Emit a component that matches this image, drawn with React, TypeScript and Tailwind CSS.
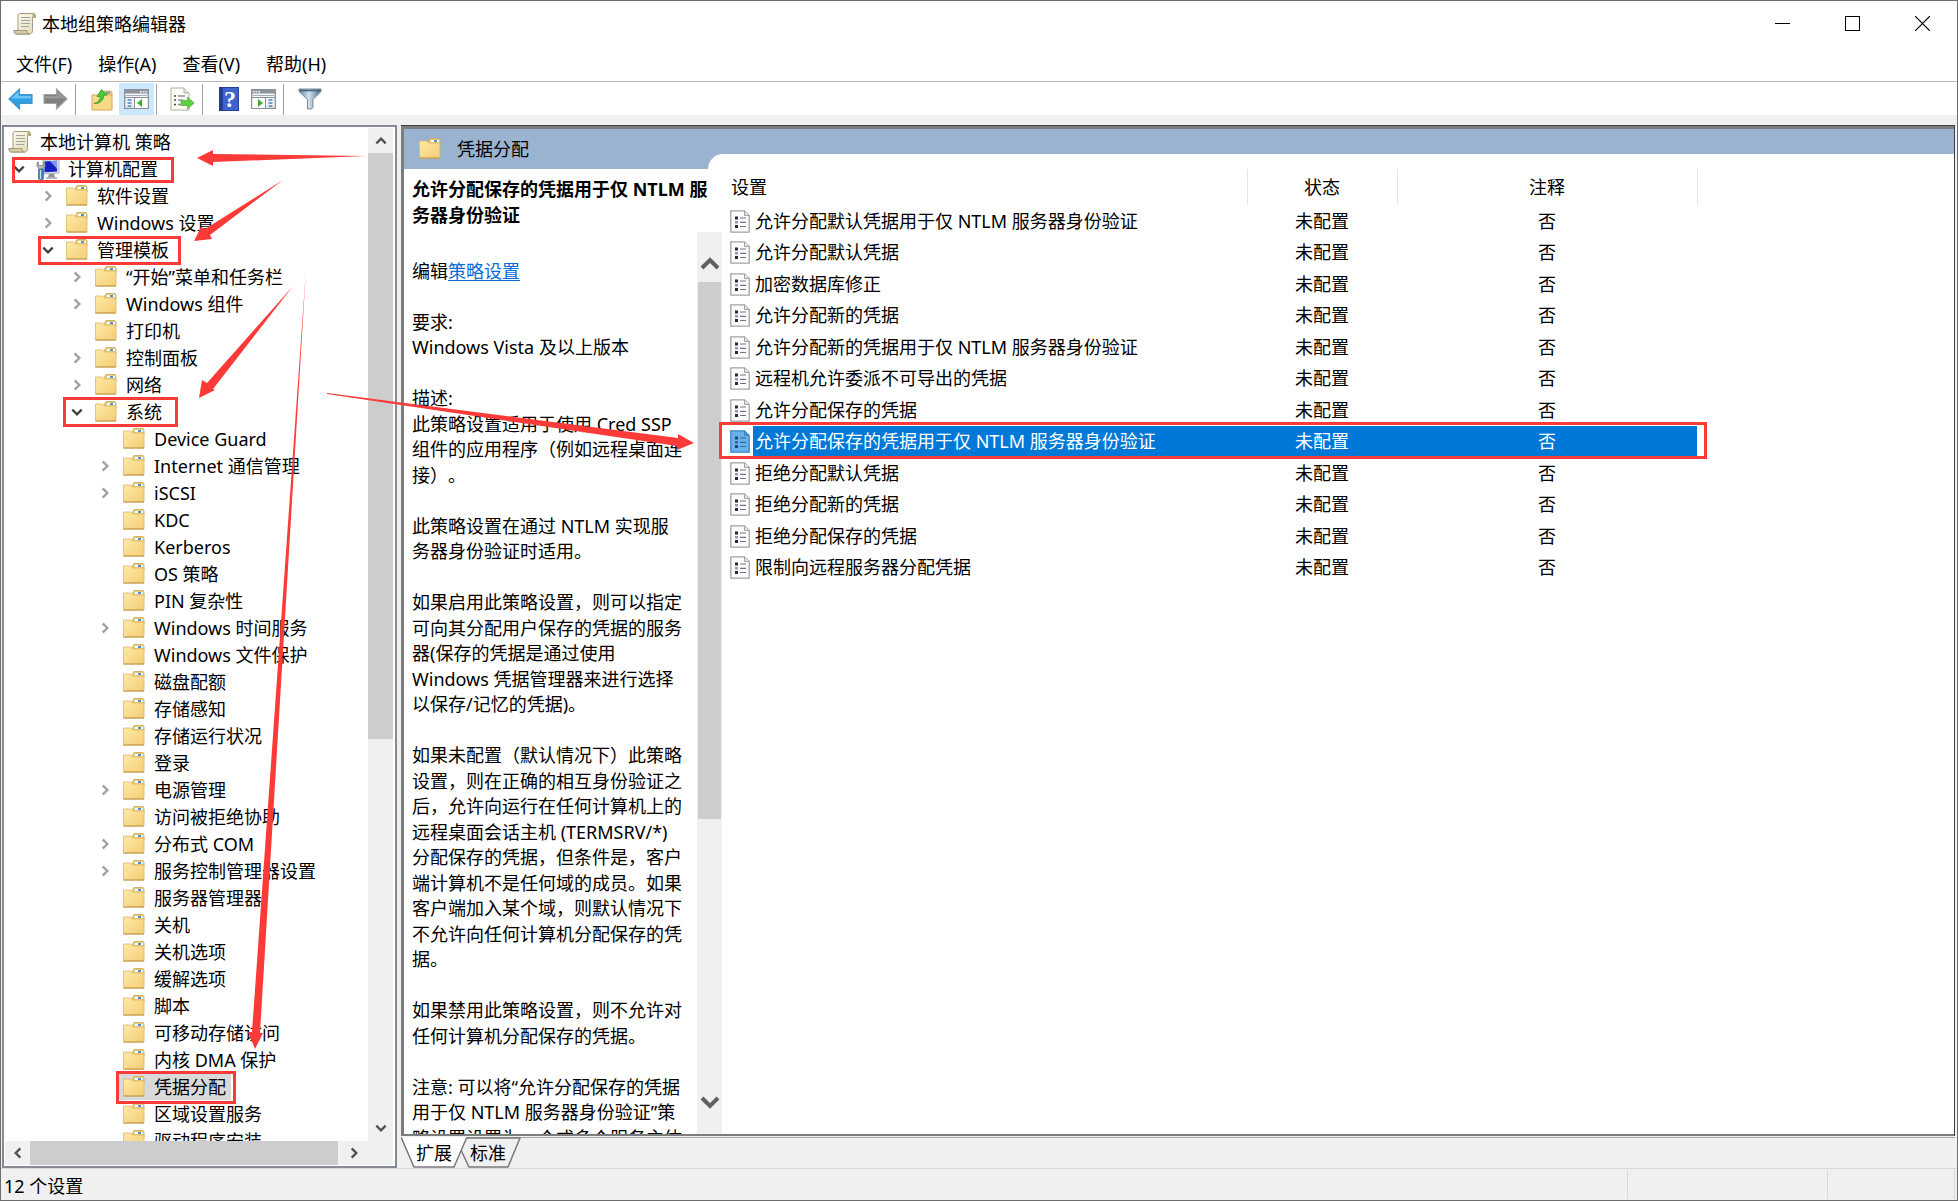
import { ReactNode } from 'react';
import clsx from 'clsx';

type TreeItem = {
  label: string;
  level: number;
  icon?: 'scroll' | 'computer';
  state?: 'open' | 'closed';
  selected?: boolean;
};

const tree: TreeItem[] = [
  { label: '本地计算机 策略', level: 0, icon: 'scroll' },
  { label: '计算机配置', level: 1, icon: 'computer', state: 'open' },
  { label: '软件设置', level: 2, state: 'closed' },
  { label: 'Windows 设置', level: 2, state: 'closed' },
  { label: '管理模板', level: 2, state: 'open' },
  { label: '“开始”菜单和任务栏', level: 3, state: 'closed' },
  { label: 'Windows 组件', level: 3, state: 'closed' },
  { label: '打印机', level: 3 },
  { label: '控制面板', level: 3, state: 'closed' },
  { label: '网络', level: 3, state: 'closed' },
  { label: '系统', level: 3, state: 'open' },
  { label: 'Device Guard', level: 4 },
  { label: 'Internet 通信管理', level: 4, state: 'closed' },
  { label: 'iSCSI', level: 4, state: 'closed' },
  { label: 'KDC', level: 4 },
  { label: 'Kerberos', level: 4 },
  { label: 'OS 策略', level: 4 },
  { label: 'PIN 复杂性', level: 4 },
  { label: 'Windows 时间服务', level: 4, state: 'closed' },
  { label: 'Windows 文件保护', level: 4 },
  { label: '磁盘配额', level: 4 },
  { label: '存储感知', level: 4 },
  { label: '存储运行状况', level: 4 },
  { label: '登录', level: 4 },
  { label: '电源管理', level: 4, state: 'closed' },
  { label: '访问被拒绝协助', level: 4 },
  { label: '分布式 COM', level: 4, state: 'closed' },
  { label: '服务控制管理器设置', level: 4, state: 'closed' },
  { label: '服务器管理器', level: 4 },
  { label: '关机', level: 4 },
  { label: '关机选项', level: 4 },
  { label: '缓解选项', level: 4 },
  { label: '脚本', level: 4 },
  { label: '可移动存储访问', level: 4 },
  { label: '内核 DMA 保护', level: 4 },
  { label: '凭据分配', level: 4, selected: true },
  { label: '区域设置服务', level: 4 },
  { label: '驱动程序安装', level: 4 },
];

const indent = ['pl-0', 'pl-1', 'pl-[33px]', 'pl-[62px]', 'pl-[90px]'];

const description = [
  '要求:',
  'Windows Vista 及以上版本',
  '',
  '描述:',
  '此策略设置适用于使用 Cred SSP',
  '组件的应用程序（例如远程桌面连',
  '接）。',
  '',
  '此策略设置在通过 NTLM 实现服',
  '务器身份验证时适用。',
  '',
  '如果启用此策略设置，则可以指定',
  '可向其分配用户保存的凭据的服务',
  '器(保存的凭据是通过使用',
  'Windows 凭据管理器来进行选择',
  '以保存/记忆的凭据)。',
  '',
  '如果未配置（默认情况下）此策略',
  '设置，则在正确的相互身份验证之',
  '后，允许向运行在任何计算机上的',
  '远程桌面会话主机 (TERMSRV/*)',
  '分配保存的凭据，但条件是，客户',
  '端计算机不是任何域的成员。如果',
  '客户端加入某个域，则默认情况下',
  '不允许向任何计算机分配保存的凭',
  '据。',
  '',
  '如果禁用此策略设置，则不允许对',
  '任何计算机分配保存的凭据。',
  '',
  '注意: 可以将“允许分配保存的凭据',
  '用于仅 NTLM 服务器身份验证”策',
  '略设置设置为一个或多个服务主体',
];

const settings = [
  '允许分配默认凭据用于仅 NTLM 服务器身份验证',
  '允许分配默认凭据',
  '加密数据库修正',
  '允许分配新的凭据',
  '允许分配新的凭据用于仅 NTLM 服务器身份验证',
  '远程机允许委派不可导出的凭据',
  '允许分配保存的凭据',
  '允许分配保存的凭据用于仅 NTLM 服务器身份验证',
  '拒绝分配默认凭据',
  '拒绝分配新的凭据',
  '拒绝分配保存的凭据',
  '限制向远程服务器分配凭据',
];
const selectedSetting = 7;

function ScrollIcon() {
  return (
    <svg className="w-6 h-6 shrink-0" viewBox="0 0 24 24">
      <defs>
        <linearGradient id="paper" x1="0" y1="0" x2="1" y2="1">
          <stop offset="0" stopColor="#fffdf0" />
          <stop offset="1" stopColor="#e2d9b4" />
        </linearGradient>
      </defs>
      <path d="M7 1.500h13c2 0 3 1.500 2.500 4h-3v13c0 2-1 3.500-3 3.500H4c-2 0-3-1-3-3.500h4V4c0-1.500.8-2.500 2-2.500z" fill="url(#paper)" stroke="#a39c80" strokeWidth="1" />
      <path d="M1 18.500h13c0 2 .8 3.500 2.500 3.500H4c-2 0-3-1-3-3.500z" fill="#d8cea6" stroke="#948c6c" strokeWidth=".8" />
      <path d="M20 1.500c2 0 3 1.500 2.500 4h-3c0-2 0-4 .5-4z" fill="#b8ac7c" />
      <path d="M8 5.500h9M8 8.500h9M8 11.500h9M8 14.500h8" stroke="#a3a3a8" strokeWidth="1.200" />
    </svg>
  );
}

function ComputerIcon() {
  return (
    <svg className="w-6 h-6 shrink-0" viewBox="0 0 24 24">
      <path d="M13 17h5l1 3h-7z" fill="#8c949a" />
      <path d="M10 20h11v2H10z" fill="#b3b8bc" />
      <path d="M7 3l16-1v14l-16 1z" fill="#d9dde2" stroke="#9aa1a8" strokeWidth=".8" />
      <path d="M8.500 4.500l12.500-.8v10.800l-12.500.8z" fill="#1420c4" />
      <path d="M14 4.200l7-.5v8z" fill="#7d95ee" />
      <path d="M1 6v3.500l2 2V13h4v-1.500l2-2V6L7.500 5v3.500h-5V5z" fill="#b5bac0" stroke="#6c747c" strokeWidth=".7" />
      <rect x="2.500" y="12" width="5" height="10.500" rx="1" fill="#3f7fb9" stroke="#285a8a" strokeWidth=".6" />
      <path d="M4.500 13v9" stroke="#cfe3f4" strokeWidth="1.200" />
    </svg>
  );
}

function FolderIcon() {
  return (
    <svg className="w-6 h-6 shrink-0" viewBox="0 0 24 24">
      <defs>
        <linearGradient id="folder" x1="0" y1="0" x2="1" y2="1">
          <stop offset="0" stopColor="#ffeaa6" />
          <stop offset="1" stopColor="#f3cd76" />
        </linearGradient>
      </defs>
      <path d="M10 5l2-3.500h9l1 1.500v5H10z" fill="#e9cd80" stroke="#c8a553" strokeWidth=".8" />
      <path d="M13 3h8v2h-8z" fill="#fff" />
      <path d="M16 3h3v2h-3z" fill="#4b94d8" />
      <path d="M1.500 4h7l2 2h11.500v15H1.500z" fill="url(#folder)" stroke="#d9b768" strokeWidth=".8" />
      <path d="M1.500 21h20.500" stroke="#c79e4f" strokeWidth="1.200" />
    </svg>
  );
}

function PolicyIcon({ active }: { active?: boolean }) {
  return (
    <svg className="w-5 h-[23px] shrink-0" viewBox="0 0 20 23">
      <path
        d="M.8.8h13.700l4.700 4.700v16.700H.8z"
        fill={active ? '#69b1ea' : '#fcfcfc'}
        stroke={active ? '#3f86bd' : '#a2a2a2'}
        strokeWidth="1.300"
      />
      <path d="M14.500.8v4.700h4.700" fill={active ? '#4a95d0' : '#e4e4e4'} stroke={active ? '#3f86bd' : '#a2a2a2'} />
      <path d="M5 6.500h3v3H5zM5 15h3v3H5z" fill={active ? '#184a78' : '#2b2733'} />
      <path d="M5 11h3v2.500H5z" fill={active ? '#2d6aa0' : '#9a95ac'} />
      <path d="M10 8h6M10 12.300h6M10 16.500h6" stroke={active ? '#2d6aa0' : '#77718c'} strokeWidth="1.200" />
    </svg>
  );
}

function Arrow({ forward }: { forward?: boolean }) {
  return (
    <svg className="w-[25px] h-[22px]" viewBox="0 0 25 22">
      {forward ? (
        <>
          <path d="M24 11L13.500 1v5.500H1v9h12.500V21z" fill="#7f7f7f" stroke="#a5a5a5" strokeWidth="1.200" />
          <path d="M22 10.500L14.500 3.500V8H2v2.500z" fill="#989898" />
        </>
      ) : (
        <>
          <path d="M1 11L11.500 1v5.500H24v9H11.500V21z" fill="#2d9fe4" stroke="#4a93c9" strokeWidth="1.200" />
          <path d="M3 10.500L10.500 3.500V8H23v2.500z" fill="#6cc4f5" />
        </>
      )}
    </svg>
  );
}

function FolderUpIcon() {
  return (
    <svg className="w-[22px] h-[23px]" viewBox="0 0 22 23">
      <path d="M11 6l1.500-3H20l1 1.500V9H11z" fill="#e9cd80" stroke="#c8a553" strokeWidth=".8" />
      <path d="M15 4h4v1.500h-4z" fill="#4b94d8" />
      <path d="M1 7h20v15H1z" fill="#f8d987" stroke="#d0aa58" />
      <path d="M3 15.500c4-.5 6-3 6.500-7H6L10.500 1.500 16 7h-3c-.3 5-4 9-10 8.500z" fill="#4ccb35" stroke="#2c9a1c" strokeWidth=".8" />
    </svg>
  );
}

function PaneIcon({ right }: { right?: boolean }) {
  return (
    <svg className={clsx('w-[25px] h-5', right && '-scale-x-100')} viewBox="0 0 25 20">
      <path d="M.7.7h23.600v18.600H.7z" fill="#f4f5f7" stroke="#8b9199" strokeWidth="1.300" />
      <path d="M1 1h23v3.500H1z" fill="#8d949c" />
      <path d="M16 2h2v1.500h-2zM19 2h1.500v1.500H19zM21.500 2H23v1.500h-1.500z" fill="#e8ecf0" />
      <path d="M2 6.500h21" stroke="#a9afb6" />
      <path d="M1 8.500h23M10.500 8.500v11" stroke="#8b9199" />
      <path d="M3.500 11h4M3.500 14h4M3.500 17h4" stroke="#4d7fc0" strokeWidth="1.400" />
      <path d="M11 9h12.500v9.800H11z" fill="#fff" />
      <path d="M18 10v8l-5-4z" fill="#3fae2a" />
    </svg>
  );
}

function ExportIcon() {
  return (
    <svg className="w-[25px] h-6" viewBox="0 0 25 24">
      <path d="M1 1h13l5 5v17H1z" fill="#fdfdf6" stroke="#b0b0a6" />
      <path d="M14 1v5h5" fill="#e4e4e0" stroke="#b0b0a6" />
      <path d="M4 9h2M4 13h2M4 17.500h2" stroke="#444" strokeWidth="1.600" />
      <path d="M8 9h7M8 13h5M8 17.500h5" stroke="#8e86ab" strokeWidth="1.300" />
      <path d="M11 13.500h6.500V10l6.500 6-6.500 6v-3.500H11z" fill="#5ed040" stroke="#54b83b" strokeWidth=".8" />
    </svg>
  );
}

function HelpIcon() {
  return (
    <span className="flex w-5 h-6 items-center justify-center border border-[#26419a] border-l-4 border-l-[#233c94] bg-[#3f62cf] font-['Liberation_Serif',serif] text-2xl leading-6 font-bold text-white">
      ?
    </span>
  );
}

function FilterIcon() {
  return (
    <svg className="w-6 h-[22px]" viewBox="0 0 24 22">
      <defs>
        <linearGradient id="funnel" x1="0" x2="1">
          <stop offset="0" stopColor="#5f7f99" />
          <stop offset=".45" stopColor="#d5e2ec" />
          <stop offset="1" stopColor="#4b6a85" />
        </linearGradient>
      </defs>
      <path d="M1 1h22v2.500L15 11.500v8l-1.500 1.500h-4V11.500L1 3.500z" fill="url(#funnel)" stroke="#6d8599" strokeWidth=".9" />
      <path d="M2 2.500h20" stroke="#456782" strokeWidth="1.600" />
    </svg>
  );
}

function Chevron({ dir, className }: { dir: 'up' | 'down' | 'left' | 'right'; className?: string }) {
  const paths = {
    up: 'M2 8l4-4 4 4',
    down: 'M2 4l4 4 4-4',
    left: 'M8 2L4 6l4 4',
    right: 'M4 2l4 4-4 4',
  };
  return (
    <svg className={clsx('shrink-0', className)} viewBox="0 0 12 12" fill="none" stroke="currentColor" strokeWidth="2">
      <path d={paths[dir]} />
    </svg>
  );
}

function ToolButton({ label, active, children }: { label: string; active?: boolean; children: ReactNode }) {
  return (
    <button
      aria-label={label}
      className={clsx('flex w-[35px] h-[33px] items-center justify-center', active && 'bg-[#cce8ff]')}
    >
      {children}
    </button>
  );
}

function Separator() {
  return <span className="ml-[2px] mr-2 w-px h-[31px] bg-[#a0a0a0]" />;
}

function TreeRow({ item }: { item: TreeItem }) {
  return (
    <li className={clsx('flex h-[27px] items-center whitespace-nowrap', indent[item.level])}>
      {item.level > 0 && (
        <span className="flex w-5 mr-1 justify-center">
          {item.state && (
            <button aria-label={item.label} className={item.state === 'open' ? 'text-[#404040]' : 'text-[#a0a0a0]'}>
              <Chevron dir={item.state === 'open' ? 'down' : 'right'} className="w-[14px] h-[14px]" />
            </button>
          )}
        </span>
      )}
      <button className={clsx('flex h-[27px] items-center gap-2 pl-[3px] pr-[5px]', item.selected && 'bg-[#d9d9d9]')}>
        {item.icon === 'scroll' ? <ScrollIcon /> : item.icon === 'computer' ? <ComputerIcon /> : <FolderIcon />}
        {item.label}
      </button>
    </li>
  );
}

function TreePanel() {
  return (
    <nav className="flex w-[395px] shrink-0 flex-col border-2 border-[#868b93] bg-white pl-px pr-[2px] pb-px">
      <div className="flex min-h-0 flex-1">
        <ul className="min-w-0 flex-1 overflow-hidden pt-px">
          {tree.map((item) => (
            <TreeRow key={item.label} item={item} />
          ))}
        </ul>
        <div className="mt-px flex w-[25px] shrink-0 flex-col bg-[#f0f0f0] text-[#505050]">
          <button aria-label="向上滚动" className="flex h-[25px] items-center justify-center">
            <Chevron dir="up" className="w-[14px] h-[14px]" />
          </button>
          <div className="flex-1">
            <div className="h-[61%] bg-[#cdcdcd]" />
          </div>
          <button aria-label="向下滚动" className="flex h-[27px] items-center justify-center">
            <Chevron dir="down" className="w-[14px] h-[14px]" />
          </button>
        </div>
      </div>
      <div className="flex h-6 bg-[#f0f0f0] text-[#505050]">
        <button aria-label="向左滚动" className="flex w-[25px] items-center justify-center">
          <Chevron dir="left" className="w-[14px] h-[14px]" />
        </button>
        <div className="flex-1 bg-[#cdcdcd]" />
        <button aria-label="向右滚动" className="mr-6 flex w-[31px] items-center justify-center">
          <Chevron dir="right" className="w-[14px] h-[14px]" />
        </button>
      </div>
    </nav>
  );
}

function DetailPanel() {
  return (
    <section className="flex w-[318px] shrink-0 flex-col">
      <h2 className="h-[63px] shrink-0 pt-[7px] pl-2 text-lg leading-[26px] font-bold whitespace-nowrap">
        允许分配保存的凭据用于仅 NTLM 服<br />
        务器身份验证
      </h2>
      <div className="flex min-h-0 flex-1">
        <div className="min-w-0 flex-1 overflow-hidden pt-[26px] pl-2 whitespace-nowrap">
          <p className="h-[51px] leading-[26px]">
            编辑
            <a href="#edit" className="text-[#0a6cd6] underline underline-offset-2">
              策略设置
            </a>
          </p>
          {description.map((line, i) => (
            <p key={i} className="h-[26px] leading-[26px] odd:h-[25px] odd:leading-[25px]">
              {line}
            </p>
          ))}
        </div>
        <div className="flex w-[25px] flex-col bg-[#f0f0f0] px-px text-[#606060]">
          <button aria-label="向上滚动" className="flex h-[50px] items-center justify-center pt-[14px]">
            <Chevron dir="up" className="w-6 h-6" />
          </button>
          <div className="flex-1">
            <div className="h-[67%] bg-[#cdcdcd]" />
          </div>
          <button aria-label="向下滚动" className="flex h-[50px] items-start justify-center pt-[6px]">
            <Chevron dir="down" className="w-6 h-6" />
          </button>
        </div>
      </div>
    </section>
  );
}

function SettingsTable() {
  return (
    <div className="min-w-0 flex-1 overflow-hidden">
      <table className="table-fixed border-collapse whitespace-nowrap">
        <colgroup>
          <col className="w-[525px]" />
          <col className="w-[150px]" />
          <col className="w-[300px]" />
        </colgroup>
        <thead>
          <tr className="h-9">
            <th className="border-r border-[#e5e5e5] p-0 pl-[9px] text-left font-normal">设置</th>
            <th className="border-r border-[#e5e5e5] p-0 font-normal">状态</th>
            <th className="border-r border-[#e5e5e5] p-0 font-normal">注释</th>
          </tr>
        </thead>
        <tbody>
          {settings.map((name, i) => {
            const active = i === selectedSetting;
            return (
              <tr key={name} className="h-8 even:h-[31px]">
                <td className="p-0">
                  <div className="flex items-center gap-[3px] pl-2">
                    <PolicyIcon active={active} />
                    <span className={clsx('flex-1 pl-[2px] leading-[31px]', active && 'bg-[#0078d7] text-white')}>{name}</span>
                  </div>
                </td>
                <td className={clsx('p-0 text-center leading-[31px]', active && 'bg-[#0078d7] text-white')}>未配置</td>
                <td className={clsx('p-0 text-center leading-[31px]', active && 'bg-[#0078d7] text-white')}>否</td>
              </tr>
            );
          })}
        </tbody>
      </table>
    </div>
  );
}

function Tabs() {
  return (
    <div className="relative flex h-[31px] border-t border-[#a8a8a8]">
      <svg className="absolute left-0 -top-px w-[120px] h-[31px]" viewBox="0 0 120 31">
        <path d="M60 13l8 17h39l12-29H66" fill="#f0f0f0" stroke="#7a7a7a" strokeWidth="1.500" />
        <path d="M0 0l13 30h40L66 0z" fill="#fff" />
        <path d="M0 0l13 30h40L66 0" fill="none" stroke="#7a7a7a" strokeWidth="1.500" />
      </svg>
      <button className="relative ml-[15px] leading-[30px]">扩展</button>
      <button className="relative ml-[18px] leading-[30px]">标准</button>
    </div>
  );
}

// Red boxes and tapered arrows that walk through the steps
function Annotations() {
  return (
    <svg className="pointer-events-none absolute -left-px -top-px w-[1720px] h-[1120px]" viewBox="0 0 1720 1120">
      <g fill="none" stroke="#fc3a38" strokeWidth="3">
        <rect x="13.500" y="158.500" width="159" height="23" />
        <rect x="39.500" y="237.500" width="140" height="26" />
        <rect x="64.500" y="398.500" width="112" height="27" />
        <rect x="117.500" y="1072.500" width="117" height="30" />
        <rect x="720.500" y="423.500" width="985" height="34" />
      </g>
      <g fill="#fc3a38">
        <path d="M197 158l16-8v4l153 2-153 6v4z" />
        <path d="M194 241l7-14 4 2 78-49-73 55 2 4z" />
        <path d="M199 398l3-18 5 3 86-97-80 103 2 1z" />
        <path d="M255 1049l-7-17h4l54-763-46 764h3z" />
        <path d="M694 443l-17 7v-4L327 394v-1l351 45v-4z" />
      </g>
    </svg>
  );
}

export default function App() {
  return (
    <div className="relative flex h-screen flex-col overflow-hidden border border-[#6d6d6d] bg-white font-['Noto_Sans','Noto_Sans_CJK_SC',sans-serif] text-lg leading-6 text-black [text-spacing-trim:space-all]">
      <header className="flex h-[45px] shrink-0 items-center pl-3">
        <ScrollIcon />
        <h1 className="ml-[5px] flex-1">本地组策略编辑器</h1>
        <button aria-label="最小化" className="flex w-[70px] h-full items-center justify-center">
          <span className="w-[15px] h-px bg-black" />
        </button>
        <button aria-label="最大化" className="flex w-[70px] h-full items-center justify-center">
          <span className="w-[15px] h-[15px] border border-black" />
        </button>
        <button aria-label="关闭" className="flex w-[70px] h-full items-center justify-center">
          <svg className="w-[15px] h-[15px]" viewBox="0 0 15 15" stroke="#000" strokeWidth="1.200">
            <path d="M0 0l15 15M15 0L0 15" />
          </svg>
        </button>
      </header>

      <div className="flex h-9 shrink-0 items-center gap-[26px] border-b border-[#b9b9b5] pl-[15px]">
        <button>文件(F)</button>
        <button>操作(A)</button>
        <button>查看(V)</button>
        <button>帮助(H)</button>
      </div>

      <div className="flex h-[33px] shrink-0 items-center pl-[2px] pt-px">
        <ToolButton label="后退">
          <Arrow />
        </ToolButton>
        <ToolButton label="前进">
          <Arrow forward />
        </ToolButton>
        <Separator />
        <ToolButton label="向上一级">
          <FolderUpIcon />
        </ToolButton>
        <ToolButton label="显示或隐藏控制台树" active>
          <PaneIcon />
        </ToolButton>
        <Separator />
        <ToolButton label="导出列表">
          <ExportIcon />
        </ToolButton>
        <Separator />
        <ToolButton label="帮助">
          <HelpIcon />
        </ToolButton>
        <ToolButton label="显示或隐藏操作窗格">
          <PaneIcon right />
        </ToolButton>
        <Separator />
        <ToolButton label="筛选器">
          <FilterIcon />
        </ToolButton>
      </div>

      <main className="flex min-h-0 flex-1 gap-1 bg-[#f0f0f0] pt-[10px] pl-px pr-[2px]">
        <TreePanel />
        <div className="flex min-w-0 flex-1 flex-col">
          <div className="flex min-h-0 flex-1 flex-col border-t border-r border-[#404040]">
            <div className="flex min-h-0 flex-1 flex-col border-t-3 border-l-3 border-b-2 border-[#7c7c7c] bg-white">
              <div className="flex h-10 shrink-0 items-end bg-[#99b3d1]">
                <div className="flex h-10 w-[304px] items-center pl-[14px]">
                  <FolderIcon />
                  <span className="ml-[15px]">凭据分配</span>
                </div>
                <div className="h-[15px] flex-1 rounded-tl-[16px] bg-white" />
              </div>
              <div className="flex min-h-0 flex-1">
                <DetailPanel />
                <SettingsTable />
              </div>
            </div>
          </div>
          <div className="h-px" />
          <Tabs />
        </div>
      </main>

      <footer className="flex h-8 shrink-0 items-center border-t border-[#d9d9d9] bg-[#f0f0f0] pl-[3px] pr-[2px]">
        <span className="flex-1 pt-[3px]">12 个设置</span>
        <span className="w-[200px] h-[29px] border-l border-[#d9d9d9]" />
        <span className="w-[128px] h-[29px] border-x border-[#d9d9d9]" />
      </footer>

      <Annotations />
    </div>
  );
}
